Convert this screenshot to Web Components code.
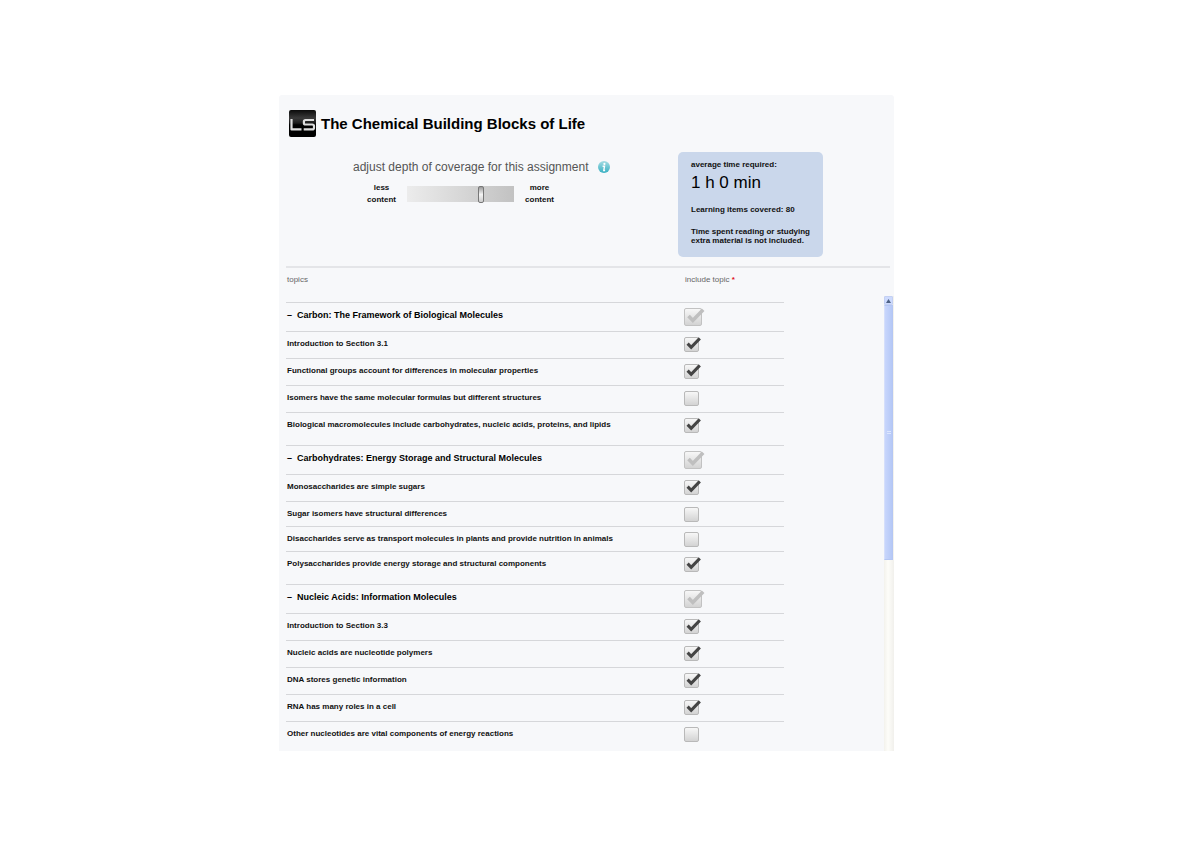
<!DOCTYPE html>
<html lang="en">
<head>
<meta charset="utf-8">
<title>The Chemical Building Blocks of Life</title>
<style>
  body {
    margin: 0;
    padding: 95px 306px 95px 279px;
    background: #fff;
    color: #111;
    font-family: "Liberation Sans", Arial, sans-serif;
    font-size: 8px;
  }
</style>
</head>
<body>
<lesson-panel>
  <lesson-title slot="title">The Chemical Building Blocks of Life</lesson-title>
  <depth-slider slot="controls" value="70">adjust depth of coverage for this assignment</depth-slider>
  <time-summary slot="controls" time="1 h 0 min" items="80"></time-summary>
  <topic-list slot="topics"></topic-list>
  <scroll-rail slot="rail"></scroll-rail>
</lesson-panel>

<script>
class BaseElement extends HTMLElement {
  constructor() {
    super();
    this.attachShadow({ mode: 'open' });
  }
  connectedCallback() {
    this.shadowRoot.innerHTML = this.template();
  }
}

customElements.define('lesson-panel', class extends BaseElement {
  template() {
    return `
    <style>
      :host { display: block; background: #f7f8fa; border-radius: 3px 3px 0 0; }
      header { padding: 15px 10px 0; }
      .controls { display: flex; justify-content: space-between; align-items: flex-start;
        padding: 15px 71px 9px 74px; }
      hr { margin: 0 4px 0 7px; border: 0; height: 2px; background: #e4e5e8; }
      .body { display: flex; padding-left: 7px; }
      .list { flex: 1; min-width: 0; padding-right: 100px; }
      .rail { display: flex; padding-top: 28px; }
    </style>
    <header><slot name="title"></slot></header>
    <div class="controls"><slot name="controls"></slot></div>
    <hr>
    <div class="body">
      <div class="list"><slot name="topics"></slot></div>
      <div class="rail"><slot name="rail"></slot></div>
    </div>`;
  }
});

customElements.define('lesson-title', class extends BaseElement {
  template() {
    return `
    <style>
      :host { display: flex; align-items: center; gap: 5px; }
      svg { width: 27px; height: 27px; flex: none; }
      h1 { margin: 0; font-size: 15px; line-height: 21px; color: #000; }
    </style>
    <svg viewBox="0 0 27 27" aria-hidden="true">
      <defs><linearGradient id="g" x2="0" y2="1">
        <stop offset="0" stop-color="#0a0a0a"/><stop offset=".3" stop-color="#3a3a3a"/>
        <stop offset=".48" stop-color="#1c1c1c"/><stop offset=".55" stop-color="#000"/>
      </linearGradient></defs>
      <rect width="27" height="27" rx="2" fill="url(#g)"/>
      <g fill="none" stroke="#dedede" stroke-width="2.2" stroke-linejoin="round">
        <path d="M2.5 9v10.4h10"/>
        <path d="M25 10h-8.5q-1.6 0-1.6 1.5v1.4q0 1.6 1.6 1.6h6.8q1.7 0 1.7 1.6v1.6q0 1.7-1.7 1.7h-8.6"/>
      </g>
    </svg>
    <h1><slot></slot></h1>`;
  }
});

customElements.define('depth-slider', class extends BaseElement {
  template() {
    return `
    <style>
      :host { display: block; padding-top: 7px; }
      .head { display: flex; align-items: center; gap: 10px; }
      .head label { font-size: 12px; line-height: 16px; color: #555; }
      button { display: block; border: 0; padding: 0; background: none; width: 12px; height: 12px; }
      svg { display: block; }
      .row { display: flex; align-items: center; gap: 11px; margin-top: 7px; padding-left: 14px; }
      .row span { width: 29px; text-align: center; font-weight: bold; line-height: 12px; }
      input { appearance: none; display: block; margin: 0; width: 107px; height: 16px;
        background: linear-gradient(90deg, #ececec, #c2c2c2); }
      input::-webkit-slider-thumb { appearance: none; box-sizing: border-box; width: 6px; height: 17px;
        border: 1px solid #777; border-radius: 2px;
        background: linear-gradient(#999, #f4f4f4 50%, #ccc); }
    </style>
    <div class="head">
      <label for="depth"><slot></slot></label>
      <button aria-label="About depth of coverage"><svg width="12" height="12" viewBox="0 0 12 12">
        <defs><linearGradient id="b" x2="0" y2="1"><stop stop-color="#a5dce3"/><stop offset="1" stop-color="#38b0c2"/></linearGradient></defs>
        <circle cx="6" cy="6" r="6" fill="url(#b)"/>
        <circle cx="6.4" cy="2.9" r="1.1" fill="#fff"/><path d="M4.6 5.3h1.9L5.8 9.5h1.3" fill="none" stroke="#fff" stroke-width="1.4"/>
      </svg></button>
    </div>
    <div class="row">
      <span>less content</span>
      <input id="depth" type="range" min="0" max="100" value="${this.getAttribute('value')}">
      <span>more content</span>
    </div>`;
  }
});

customElements.define('time-summary', class extends BaseElement {
  template() {
    return `
    <style>
      :host { display: block; box-sizing: border-box; width: 145px; padding: 8px 12px 12px 13px;
        border-radius: 5px; background: #cad7eb; font-weight: bold; line-height: 9px; }
      p { margin: 0; }
      .time { margin: 4px 0 12px; font-size: 17px; line-height: 20px; font-weight: normal; color: #000; }
      .note { margin-top: 13px; }
    </style>
    <p>average time required:</p>
    <p class="time">${this.getAttribute('time')}</p>
    <p>Learning items covered: ${this.getAttribute('items')}</p>
    <p class="note">Time spent reading or studying extra material is not included.</p>`;
  }
});

const SECTIONS = [
  { title: 'Carbon: The Framework of Biological Molecules', topics: [
    ['Introduction to Section 3.1', true],
    ['Functional groups account for differences in molecular properties', true],
    ['Isomers have the same molecular formulas but different structures', false],
    ['Biological macromolecules include carbohydrates, nucleic acids, proteins, and lipids', true] ] },
  { title: 'Carbohydrates: Energy Storage and Structural Molecules', topics: [
    ['Monosaccharides are simple sugars', true],
    ['Sugar isomers have structural differences', false, 'tight'],
    ['Disaccharides serve as transport molecules in plants and provide nutrition in animals', false, 'tight'],
    ['Polysaccharides provide energy storage and structural components', true] ] },
  { title: 'Nucleic Acids: Information Molecules', topics: [
    ['Introduction to Section 3.3', true],
    ['Nucleic acids are nucleotide polymers', true],
    ['DNA stores genetic information', true],
    ['RNA has many roles in a cell', true],
    ['Other nucleotides are vital components of energy reactions', false] ] }
];

customElements.define('topic-list', class extends BaseElement {
  template() {
    const box = (id, on) => `<td><div class="check">
      <input type="checkbox" id="${id}" ${on ? 'checked' : ''}>
      <svg viewBox="0 0 18 15" aria-hidden="true"><path d="M3.6 6.6 7.2 10.4 15.8 1.4"/></svg></div></td>`;
    const groups = SECTIONS.map((s, i) => `<tbody>
      <tr class="section"><th scope="rowgroup"><div class="name"><button aria-label="Collapse section">–</button><label for="s${i}">${s.title}</label></div></th>${box('s' + i, true)}</tr>
      ${s.topics.map(([name, on, cls = ''], j) => `<tr class="${cls}"><th scope="row"><label for="t${i}-${j}">${name}</label></th>${box(`t${i}-${j}`, on)}</tr>`).join('')}
    </tbody>`).join('');
    return `
    <style>
      :host { display: block; }
      table { width: 100%; border-collapse: separate; border-spacing: 0; table-layout: fixed; }
      th, td { padding: 0; text-align: left; vertical-align: top; }
      col.pick { width: 100px; }
      thead th { height: 34px; font-weight: normal; color: #666; line-height: 24px; padding-left: 1px; }
      b { color: #e01020; }
      tbody tr { height: 27px; }
      tbody tr.tight { height: 25px; }
      tbody tr.section { height: 29px; }
      tbody tr:last-child { height: 33px; }
      tbody:last-child tr:last-child { height: 30px; }
      tbody th, tbody td { border-top: 1px solid #d6d7da; }
      tbody th { padding: 7px 0 0 1px; line-height: 10px; }
      .section th { font-size: 9px; color: #000; }
      .name { display: flex; }
      button { all: unset; width: 10px; }
      .check { position: relative; width: 15px; height: 15px; padding-top: 5px; }
      input { appearance: none; display: block; box-sizing: border-box; margin: 0; width: 100%; height: 100%;
        border: 1px solid #b9b9b9; border-radius: 2px; background: linear-gradient(#f7f7f7, #d3d3d3); }
      svg { display: none; position: absolute; left: 0; bottom: 0; width: 18px; height: 15px; overflow: visible; pointer-events: none; }
      input:checked + svg { display: block; }
      path { fill: none; stroke: #444; stroke-width: 3; }
      .section .check { width: 18px; height: 18px; }
      .section svg { width: 22px; height: 18px; }
      .section path { stroke: #bfbfbf; }
      .section input { border-color: #c2c2c2; }
    </style>
    <table>
      <colgroup><col><col class="pick"></colgroup>
      <thead><tr><th scope="col">topics</th><th scope="col">include topic <b>*</b></th></tr></thead>
      ${groups}
    </table>`;
  }
});

customElements.define('scroll-rail', class extends BaseElement {
  template() {
    return `
    <style>
      :host { display: flex; flex-direction: column; width: 10px; background: linear-gradient(90deg, #f3f2ec, #fdfdf9 40%, #f1f0ec); }
      button { display: grid; place-items: center; flex: none; height: 9px; padding: 0; margin: 0 1px 0 0;
        border: 1px solid #c3d0f3; border-radius: 1px; background: #cddafd; }
      .thumb { display: grid; place-content: center; gap: 1px; flex: 0 0 56%; margin-right: 1px; box-sizing: border-box;
        border: 1px solid #b4c6f3; border-left-color: #d5dffb; background: linear-gradient(90deg, #c8d6fc, #b5c8f6); }
      .thumb i { width: 4px; height: 1px; background: #dce6ff; }
    </style>
    <button aria-label="Scroll up"><svg width="5" height="4" viewBox="0 0 5 4"><path d="M0 4 2.5 0 5 4z" fill="#4d6185"/></svg></button>
    <div class="thumb"><i></i><i></i></div>`;
  }
});
</script>
</body>
</html>
